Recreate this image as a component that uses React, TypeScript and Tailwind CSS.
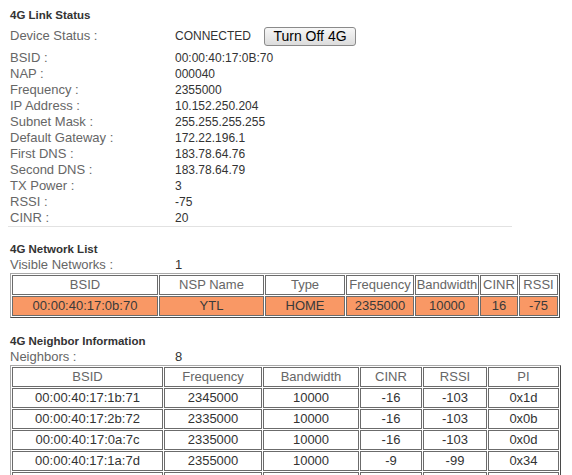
import React from 'react'

const LINK = [
  ['BSID :', '00:00:40:17:0B:70'],
  ['NAP :', '000040'],
  ['Frequency :', '2355000'],
  ['IP Address :', '10.152.250.204'],
  ['Subnet Mask :', '255.255.255.255'],
  ['Default Gateway :', '172.22.196.1'],
  ['First DNS :', '183.78.64.76'],
  ['Second DNS :', '183.78.64.79'],
  ['TX Power :', '3'],
  ['RSSI :', '-75'],
  ['CINR :', '20'],
]

const NET_COLS = [
  { label: 'BSID', w: 'w-[146px]' },
  { label: 'NSP Name', w: 'w-[105px]' },
  { label: 'Type', w: 'w-[80px]' },
  { label: 'Frequency', w: 'w-[68px]' },
  { label: 'Bandwidth', w: 'w-[64px]' },
  { label: 'CINR', w: 'w-[38px]' },
  { label: 'RSSI', w: 'w-[39px]' },
]
const NET_ROW = ['00:00:40:17:0b:70', 'YTL', 'HOME', '2355000', '10000', '16', '-75']

const NB_COLS = [
  { label: 'BSID', w: 'w-[151px]' },
  { label: 'Frequency', w: 'w-[98px]' },
  { label: 'Bandwidth', w: 'w-[96px]' },
  { label: 'CINR', w: 'w-[62px]' },
  { label: 'RSSI', w: 'w-[64px]' },
  { label: 'PI', w: 'w-[71px]' },
]
const NEIGHBORS = [
  ['00:00:40:17:1b:71', '2345000', '10000', '-16', '-103', '0x1d'],
  ['00:00:40:17:2b:72', '2335000', '10000', '-16', '-103', '0x0b'],
  ['00:00:40:17:0a:7c', '2335000', '10000', '-16', '-103', '0x0d'],
  ['00:00:40:17:1a:7d', '2355000', '10000', '-9', '-99', '0x34'],
  ['00:00:40:17:2a:7e', '2355000', '10000', '-11', '-101', '0x35'],
  ['00:00:40:17:0c:7f', '2345000', '10000', '-14', '-102', '0x1e'],
  ['00:00:40:17:1c:80', '2335000', '10000', '-15', '-103', '0x0c'],
  ['00:00:40:17:2c:81', '2345000', '10000', '-17', '-104', '0x1f'],
]

const tableCls =
  'table-fixed border-separate border-spacing-[1px] border border-t-[#a8a8a8] border-l-[#a8a8a8] border-r-[#4a4a4a] border-b-[#4a4a4a] text-[13px] leading-[16px]'
const cellCls = 'border border-[#6b6b6b] text-center p-0 h-[20px] font-normal whitespace-nowrap overflow-hidden'

function Title({ children, className = '' }: { children: React.ReactNode; className?: string }) {
  return <div className={`h-[16px] leading-[16px] text-[11.5px] font-bold text-[#333] ${className}`}>{children}</div>
}

export default function App() {
  return (
    <div className="h-[475px] overflow-hidden bg-white font-['Liberation_Sans',Arial,sans-serif]">
      <div className="pl-[10px] pt-[7px]">
        <Title>4G Link Status</Title>

        <div className="mt-[1px] h-[24px] flex items-center">
          <div className="w-[165px] text-[13px] text-[#666]">Device Status :</div>
          <div className="text-[12px] text-[#333]">CONNECTED</div>
          <button className="ml-[13px] h-[19px] w-[92px] rounded-[3px] border border-[#8a8a8a] bg-gradient-to-b from-[#f7f7f7] to-[#dcdcdc] text-[14px] leading-none text-black">
            Turn Off 4G
          </button>
        </div>

        <div className="mt-[2px]">
          {LINK.map(([k, v]) => (
            <div key={k} className="flex h-[16px] items-center">
              <div className="w-[165px] text-[13px] text-[#666]">{k}</div>
              <div className="text-[12px] text-[#333]">{v}</div>
            </div>
          ))}
        </div>
        <div className="ml-[-2px] h-px w-[504px] bg-[#e2e2e2]" />

        <Title className="mt-[14px]">4G Network List</Title>
        <div className="flex h-[16px] items-center text-[13px]">
          <div className="w-[165px] text-[#666]">Visible Networks :</div>
          <div className="text-[#333]">1</div>
        </div>
        <table className={`${tableCls} w-[550px]`}>
          <thead>
            <tr>
              {NET_COLS.map((c) => (
                <th key={c.label} className={`${cellCls} ${c.w} text-[#666]`}>{c.label}</th>
              ))}
            </tr>
          </thead>
          <tbody>
            <tr>
              {NET_ROW.map((v, i) => (
                <td key={i} className={`${cellCls} bg-[#f99865] text-[#3a3a3a]`}>{v}</td>
              ))}
            </tr>
          </tbody>
        </table>

        <Title className="mt-[15px]">4G Neighbor Information</Title>
        <div className="flex h-[16px] items-center text-[13px]">
          <div className="w-[165px] text-[#666]">Neighbors :</div>
          <div className="text-[#333]">8</div>
        </div>
        <table className={`${tableCls} w-[551px]`}>
          <thead>
            <tr>
              {NB_COLS.map((c) => (
                <th key={c.label} className={`${cellCls} ${c.w} text-[#666]`}>{c.label}</th>
              ))}
            </tr>
          </thead>
          <tbody>
            {NEIGHBORS.map((r) => (
              <tr key={r[0]}>
                {r.map((v, i) => (
                  <td key={i} className={`${cellCls} text-[#333]`}>{v}</td>
                ))}
              </tr>
            ))}
          </tbody>
        </table>
      </div>
    </div>
  )
}
